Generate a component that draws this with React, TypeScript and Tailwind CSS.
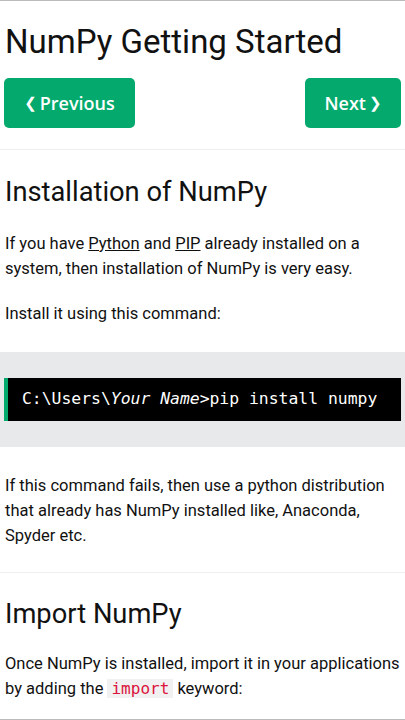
export default function App() {
  const body = "font-['Roboto',sans-serif] text-[16.5px] leading-[25px] text-[#111]";
  const h2 = "mx-[5px] font-['Roboto',sans-serif] text-[27.3px] leading-[32px] text-[#111]";
  return (
    <div className="h-[720px] w-[405px] overflow-hidden border-y border-[#bbb] bg-white">
      <h1 className="mx-[5px] mt-[20px] font-['Roboto',sans-serif] text-[33px] leading-[42px] text-[#111]">
        NumPy Getting Started
      </h1>
      <div className="mx-[4px] mt-[15px] flex justify-between">
        <a className="flex h-[50px] w-[131px] items-center justify-center rounded-[5px] bg-[#04AA6D] font-['Open_Sans',sans-serif] text-[18px] font-semibold text-white">
          <span className="mr-[3px] font-['DejaVu_Sans',sans-serif] text-[15px]">❮</span>Previous
        </a>
        <a className="flex h-[50px] w-[96px] items-center justify-center rounded-[5px] bg-[#04AA6D] font-['Open_Sans',sans-serif] text-[18px] font-semibold text-white">
          Next<span className="ml-[3px] font-['DejaVu_Sans',sans-serif] text-[15px]">❯</span>
        </a>
      </div>
      <hr className="mt-[21px] border-[#eee]" />
      <h2 className={`mt-[26px] ${h2}`}>Installation of NumPy</h2>
      <p className={`mx-[5px] mt-[23px] ${body}`}>
        If you have <u>Python</u> and <u>PIP</u> already installed on a system, then installation of NumPy is very easy.
      </p>
      <p className={`mx-[5px] mt-[20px] ${body}`}>Install it using this command:</p>
      <div className="mt-[26px] bg-[#e7e9eb] py-[26px] px-[4px]">
        <div className="flex h-[43px] items-center border-l-[4px] border-[#04AA6D] bg-black pl-[14px] font-['DejaVu_Sans_Mono',monospace] text-[16.4px] text-white">
          C:\Users\<i>Your Name</i>&gt;pip install numpy
        </div>
      </div>
      <p className={`mx-[5px] mt-[26px] ${body}`}>
        If this command fails, then use a python distribution that already has NumPy installed like, Anaconda, Spyder etc.
      </p>
      <hr className="mt-[24px] border-[#eee]" />
      <h2 className={`mt-[25px] ${h2}`}>Import NumPy</h2>
      <p className={`mx-[5px] mt-[21px] ${body}`}>
        Once NumPy is installed, import it in your applications by adding the{" "}
        <code className="bg-[#f1f1f1] px-[4px] font-['DejaVu_Sans_Mono',monospace] text-[16px] text-[#dc143c]">import</code>{" "}
        keyword:
      </p>
    </div>
  );
}
